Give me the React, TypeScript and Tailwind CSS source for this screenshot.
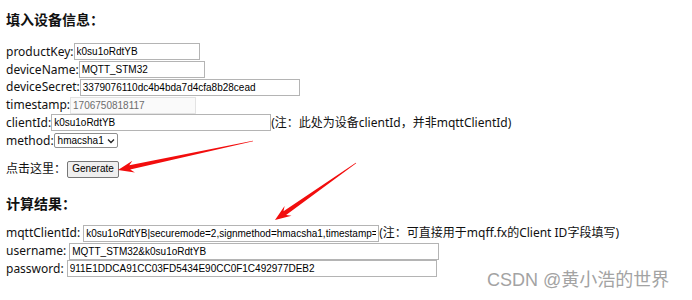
import React from 'react';

const FONT = '"Noto Sans", "Noto Sans CJK SC", sans-serif';

function arrowPoints(tx: number, ty: number, hx: number, hy: number) {
  const dx = hx - tx;
  const dy = hy - ty;
  const len = Math.hypot(dx, dy);
  const ux = dx / len;
  const uy = dy / len;
  const nx = -uy;
  const ny = ux;
  const headLen = 15;
  const bx = hx - ux * headLen;
  const by = hy - uy * headLen;
  const pts: [number, number][] = [
    [tx + nx * 0.3, ty + ny * 0.3],
    [bx + ux * 3 + nx * 2.2, by + uy * 3 + ny * 2.2],
    [bx - ux * 1 + nx * 6, by - uy * 1 + ny * 6],
    [hx, hy],
    [bx - ux * 1 - nx * 6, by - uy * 1 - ny * 6],
    [bx + ux * 3 - nx * 2.2, by + uy * 3 - ny * 2.2],
    [tx - nx * 0.3, ty - ny * 0.3],
  ];
  return pts.map(([x, y]) => `${x.toFixed(1)},${y.toFixed(1)}`).join(' ');
}

function Field({
  label,
  value,
  width,
  disabled,
  note,
}: {
  label: string;
  value: string;
  width: string;
  disabled?: boolean;
  note?: string;
}) {
  return (
    <div className="flex items-center h-[17.75px] whitespace-nowrap">
      <span>{label}</span>
      <input
        readOnly
        value={value}
        className={`${width} h-[17px] px-[2px] text-[10px] border outline-none ${
          disabled
            ? 'bg-[#fafafa] text-[#6d6d6d] border-[#e3e3e3]'
            : 'bg-white text-black border-[#b4b4b4]'
        }`}
        style={{ fontFamily: '"Liberation Sans", Arial, sans-serif' }}
      />
      {note && <span>{note}</span>}
    </div>
  );
}

export default function App() {
  return (
    <div
      className="relative w-[692px] h-[300px] bg-white text-[12px] text-[#111] px-[6px] overflow-hidden"
      style={{ fontFamily: FONT }}
    >
      <h2 className="pt-[10px] text-[14px] leading-[20px] font-bold">填入设备信息：</h2>

      <div className="mt-[13px]">
        <Field label="productKey:" value="k0su1oRdtYB" width="w-[126px]" />
        <Field label="deviceName:" value="MQTT_STM32" width="w-[126px]" />
        <Field label="deviceSecret:" value="3379076110dc4b4bda7d4cfa8b28cead" width="w-[220px]" />
        <Field label="timestamp:" value="1706750818117" width="w-[126px]" disabled />
        <Field
          label="clientId:"
          value="k0su1oRdtYB"
          width="w-[220px]"
          note="(注：此处为设备clientId，并非mqttClientId)"
        />
        <div className="flex items-center h-[17.75px]">
          <span>method:</span>
          <div
            className="flex items-center justify-between w-[64px] h-[15px] pl-[3px] pr-[2px] border border-[#8f8f8f] rounded-[2px] text-[10px] text-black"
            style={{ fontFamily: '"Liberation Sans", Arial, sans-serif' }}
          >
            <span>hmacsha1</span>
            <svg width="8" height="6" viewBox="0 0 8 6">
              <path d="M1 1.5 L4 4.5 L7 1.5" fill="none" stroke="#222" strokeWidth="1.3" />
            </svg>
          </div>
        </div>
      </div>

      <div className="flex items-center h-[17px] mt-[11px]">
        <span>点击这里：</span>
        <button
          className="h-[17px] w-[52px] ml-[1px] text-[10px] text-black bg-[#efefef] border border-[#767676] rounded-[2px] leading-none"
          style={{ fontFamily: '"Liberation Sans", Arial, sans-serif' }}
        >
          Generate
        </button>
      </div>

      <h2 className="mt-[16px] text-[14px] leading-[20px] font-bold">计算结果：</h2>

      <div className="mt-[11px]">
        <Field
          label="mqttClientId: "
          value="k0su1oRdtYB|securemode=2,signmethod=hmacsha1,timestamp=1706750818117|"
          width="w-[296px] ml-[3px]"
          note="(注：可直接用于mqff.fx的Client ID字段填写)"
        />
        <Field label="username: " value="MQTT_STM32&k0su1oRdtYB" width="w-[370px] ml-[3px]" />
        <Field label="password: " value="911E1DDCA91CC03FD5434E90CC0F1C492977DEB2" width="w-[370px] ml-[3px]" />
      </div>

      <svg className="absolute left-0 top-0 pointer-events-none" width="692" height="300">
        <polygon points={arrowPoints(253, 141, 118, 170)} fill="#f20d0d" />
        <polygon points={arrowPoints(356, 163, 275, 220)} fill="#f20d0d" />
      </svg>

      <div
        className="absolute left-[487px] top-[268px] text-[18px] leading-[24px] text-[#a3a3a3] whitespace-nowrap"
        style={{ fontFamily: '"Liberation Sans", "Noto Sans CJK SC", sans-serif' }}
      >
        CSDN @黄小浩的世界
      </div>
    </div>
  );
}
